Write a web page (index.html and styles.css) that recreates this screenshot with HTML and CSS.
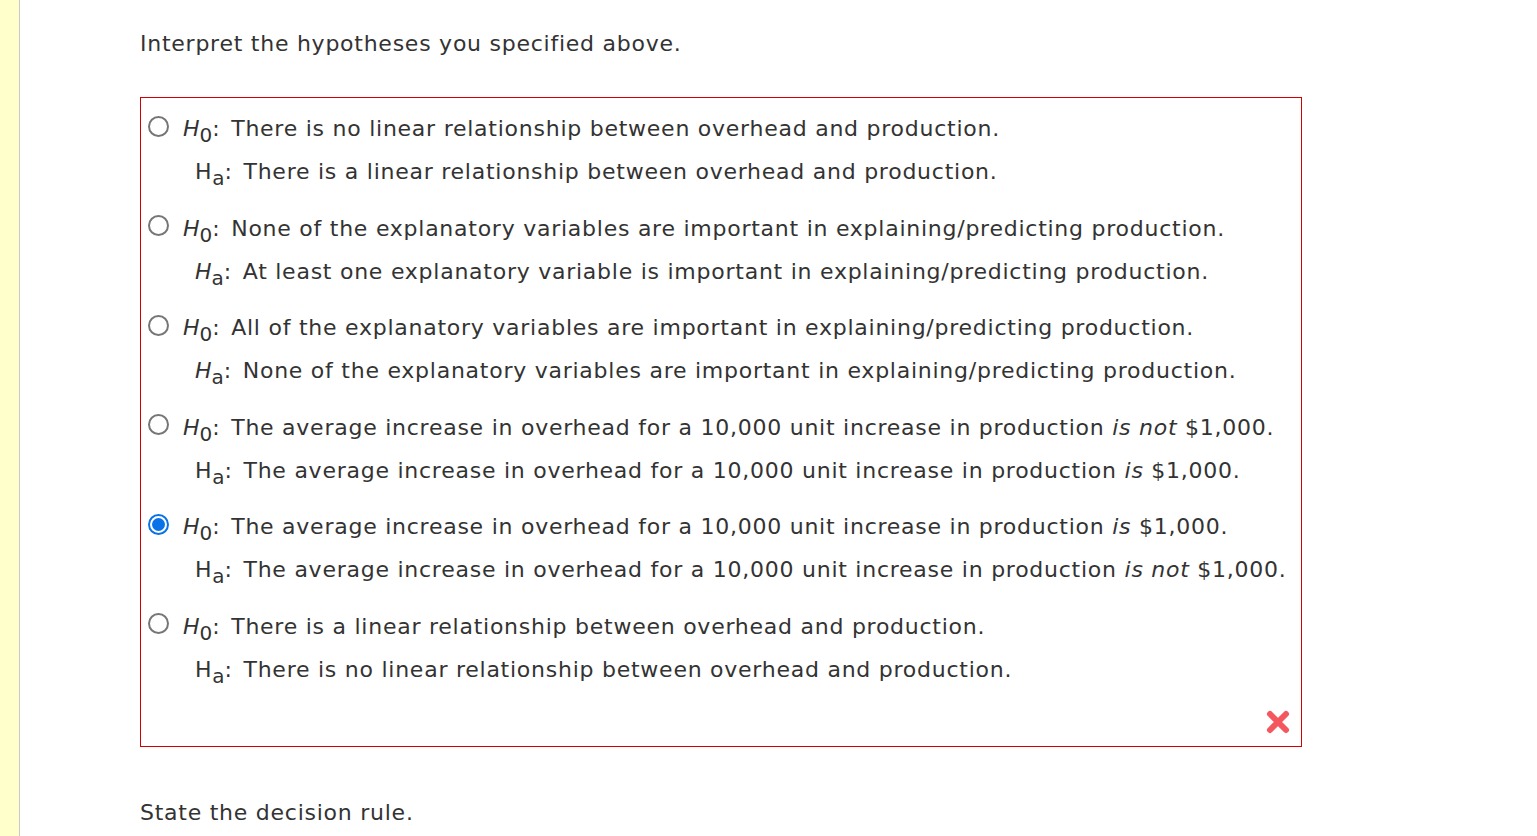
FILE: index.html
```html
<!DOCTYPE html>
<html>
<head>
<meta charset="utf-8">
<link rel="stylesheet" href="styles.css">
</head>
<body>
<div class="page">
  <div class="sidebar"></div>
  <div class="main">
    <p class="prompt">Interpret the hypotheses you specified above.</p>
    <div class="answer-box">
      <div class="option">
        <div class="line h0"><span class="radio"></span><span class="hyp"><i>H</i><sub>0</sub>:</span> There is no linear relationship between overhead and production.</div>
        <div class="line ha"><span class="hyp">H<sub>a</sub>:</span> There is a linear relationship between overhead and production.</div>
      </div>
      <div class="option">
        <div class="line h0"><span class="radio"></span><span class="hyp"><i>H</i><sub>0</sub>:</span> None of the explanatory variables are important in explaining/predicting production.</div>
        <div class="line ha"><span class="hyp"><i>H</i><sub>a</sub>:</span> At least one explanatory variable is important in explaining/predicting production.</div>
      </div>
      <div class="option">
        <div class="line h0"><span class="radio"></span><span class="hyp"><i>H</i><sub>0</sub>:</span> All of the explanatory variables are important in explaining/predicting production.</div>
        <div class="line ha"><span class="hyp"><i>H</i><sub>a</sub>:</span> None of the explanatory variables are important in explaining/predicting production.</div>
      </div>
      <div class="option">
        <div class="line h0"><span class="radio"></span><span class="hyp"><i>H</i><sub>0</sub>:</span> The average increase in overhead for a 10,000 unit increase in production <i>is not</i> $1,000.</div>
        <div class="line ha"><span class="hyp">H<sub>a</sub>:</span> The average increase in overhead for a 10,000 unit increase in production <i>is</i> $1,000.</div>
      </div>
      <div class="option">
        <div class="line h0"><span class="radio checked"></span><span class="hyp"><i>H</i><sub>0</sub>:</span> The average increase in overhead for a 10,000 unit increase in production <i>is</i> $1,000.</div>
        <div class="line ha"><span class="hyp">H<sub>a</sub>:</span> The average increase in overhead for a 10,000 unit increase in production <i>is not</i> $1,000.</div>
      </div>
      <div class="option">
        <div class="line h0"><span class="radio"></span><span class="hyp"><i>H</i><sub>0</sub>:</span> There is a linear relationship between overhead and production.</div>
        <div class="line ha"><span class="hyp">H<sub>a</sub>:</span> There is no linear relationship between overhead and production.</div>
      </div>
      <div class="mark">
        <svg width="26" height="26" viewBox="0 0 26 26"><path d="M5 5 L21 21 M21 5 L5 21" stroke="#f4575e" stroke-width="6" stroke-linecap="round" fill="none"/></svg>
      </div>
    </div>
    <p class="prompt next">State the decision rule.</p>
  </div>
</div>
</body>
</html>
```

FILE: styles.css
```css
html, body {
  margin: 0;
  padding: 0;
  background: #ffffff;
}
body {
  font-family: "DejaVu Sans", Verdana, sans-serif;
  color: #333333;
  font-size: 22px;
}
.page {
  display: flex;
  min-height: 836px;
}
.sidebar {
  width: 19px;
  background: #ffffcc;
  border-right: 1px solid #c8c8c8;
  flex: none;
}
.main {
  padding-left: 120px;
  padding-top: 30px;
}
.prompt {
  margin: 0;
  line-height: 28px;
  letter-spacing: 0.75px;
}
.answer-box {
  margin-top: 39px;
  width: 1160px;
  border: 1px solid #d40000;
  padding: 16px 0 11px 0;
}
.option + .option {
  margin-top: 26.5px;
}
.line {
  line-height: 30px;
  height: 30px;
  white-space: nowrap;
  letter-spacing: 0.75px;
}
.line.ha {
  margin-top: 13px;
  padding-left: 54px;
}
.radio {
  display: inline-block;
  width: 17px;
  height: 17px;
  border: 2px solid #767676;
  border-radius: 50%;
  margin: 0 14px 0 7px;
  box-sizing: content-box;
  vertical-align: middle;
  position: relative;
  top: -4px;
}
.radio.checked {
  border-color: #0a72e8;
}
.radio.checked::after {
  content: "";
  position: absolute;
  left: 2px;
  top: 2px;
  width: 13px;
  height: 13px;
  border-radius: 50%;
  background: #0a72e8;
}
.hyp {
  margin-right: 3px;
}
.hyp sub {
  font-size: 20px;
  vertical-align: -6px;
  line-height: 0;
  letter-spacing: 0;
}
.hyp i {
  letter-spacing: 0;
}
.mark {
  display: flex;
  justify-content: flex-end;
  padding-right: 10px;
  margin-top: 24px;
}
.mark svg {
  display: block;
}
.next {
  margin-top: 52px;
}
```
